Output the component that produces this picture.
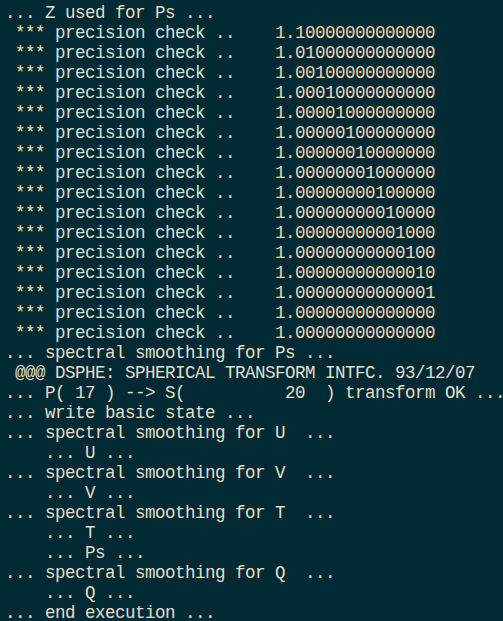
const precision = [
  "1.10000000000000",
  "1.01000000000000",
  "1.00100000000000",
  "1.00010000000000",
  "1.00001000000000",
  "1.00000100000000",
  "1.00000010000000",
  "1.00000001000000",
  "1.00000000100000",
  "1.00000000010000",
  "1.00000000001000",
  "1.00000000000100",
  "1.00000000000010",
  "1.00000000000001",
  "1.00000000000000",
  "1.00000000000000",
];

const after = [
  "... spectral smoothing for Ps ...",
  " @@@ DSPHE: SPHERICAL TRANSFORM INTFC. 93/12/07",
  "... P( 17 ) --> S(          20  ) transform OK ...",
  "... write basic state ...",
  "... spectral smoothing for U  ...",
  "    ... U ...",
  "... spectral smoothing for V  ...",
  "    ... V ...",
  "... spectral smoothing for T  ...",
  "    ... T ...",
  "    ... Ps ...",
  "... spectral smoothing for Q  ...",
  "    ... Q ...",
  "... end execution ...",
];

export default function App() {
  return (
    <div className="w-[503px] h-[621px] overflow-hidden bg-[#022a35] pt-[3px] pl-[5px] font-['Liberation_Mono',monospace] text-[17.5px] tracking-[-0.5px] leading-[20px] text-[#e2dfcc] whitespace-pre">
      <div>... Z used for Ps ...</div>

      {/* precision rows */}
      {precision.map((num, i) => (
        <div key={i}>
          {" "}
          <span className="text-[#f6e6a2]">***</span>
          <span className="text-[#d2e2de]"> precision check ..    </span>
          <span className="text-[#f2d4aa]">{num}</span>
        </div>
      ))}

      {after.map((line, i) => (
        <div key={"a" + i}>{line}</div>
      ))}
    </div>
  );
}
